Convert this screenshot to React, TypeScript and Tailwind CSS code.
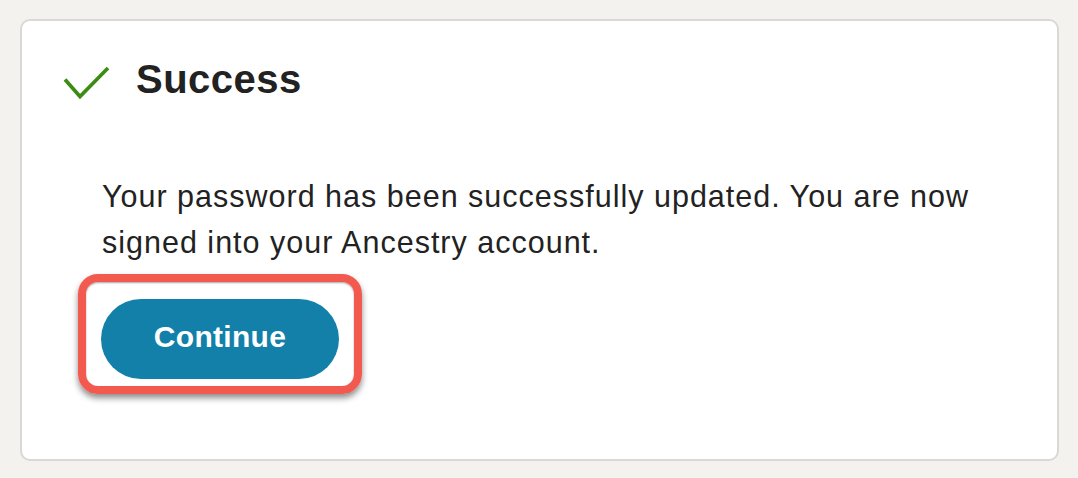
import React from "react";

export default function App() {
  return (
    <div className="w-[1078px] h-[478px] bg-[#f3f2ee] pt-[19px] pl-[20px]" style={{ fontFamily: '"Liberation Sans", Arial, sans-serif' }}>
      <div className="w-[1039px] h-[442px] bg-white border-2 border-[#d9d8d4] rounded-[10px] pl-[40px] pt-[38px]">
        <div className="flex items-start gap-[24px]">
          <svg width="50" height="36" viewBox="0 0 50 36" className="shrink-0 mt-[6px]">
            <path d="M3 14.5 L18 31.5 L46 3" fill="none" stroke="#3b8c12" strokeWidth="3.6" />
          </svg>
          <h1 className="text-[40px] font-bold text-[#222222] tracking-[0.5px] leading-none h-[40px]">Success</h1>
        </div>
        <div className="pl-[40px] pt-[72px]">
          <p className="text-[30.5px] leading-[46px] text-[#222222] tracking-[1px] w-[900px]">
            Your password has been successfully updated. You are now
            <br />
            signed into your Ancestry account.
          </p>
          <div className="mt-[9px] -ml-[24px] w-[284px] h-[120px] rounded-[20px] border-[8px] border-[#f25a4f] shadow-[0_4px_6px_rgba(0,0,0,0.45),inset_0_1px_2px_rgba(0,0,0,0.35)] pl-[15px] pt-[17px]">
            <button className="w-[238px] h-[80px] rounded-full bg-[#1280a9] text-white text-[30px] font-bold tracking-[0.3px] pb-[6px]">
              Continue
            </button>
          </div>
        </div>
      </div>
    </div>
  );
}
